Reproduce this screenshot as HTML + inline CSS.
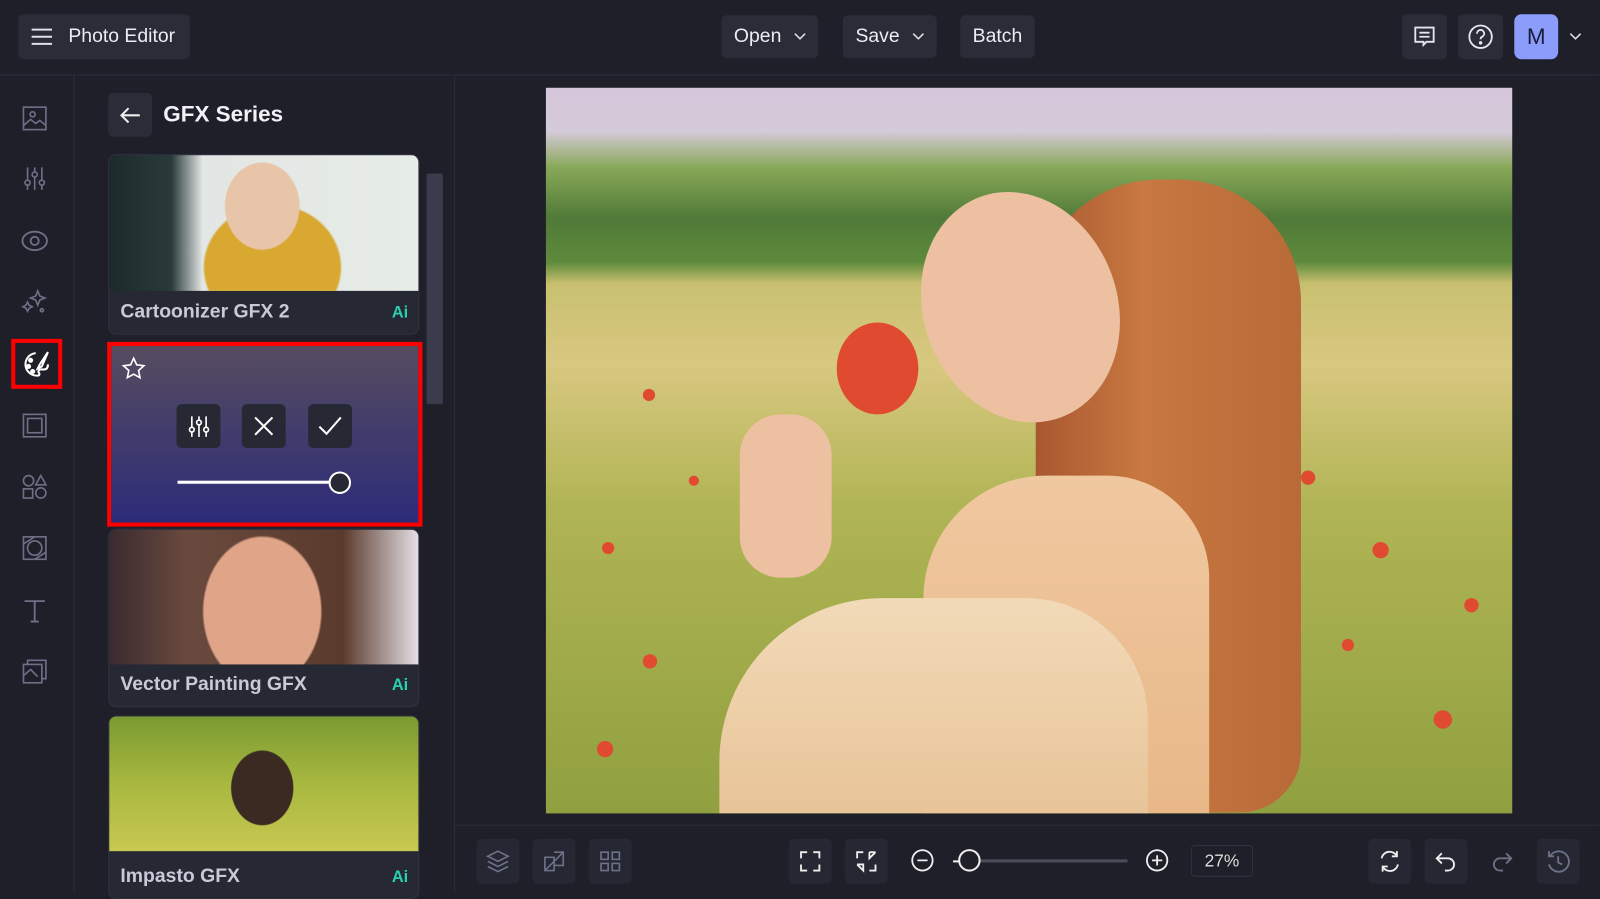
<!DOCTYPE html>
<html><head><meta charset="utf-8"><style>
*{box-sizing:border-box;margin:0;padding:0}
html,body{width:1600px;height:891px;overflow:hidden;background:#1e1f29;font-family:"Liberation Sans",sans-serif;color:#e6e6ee}
#s{position:absolute;left:0;top:0;width:1568px;height:873px;transform:scale(1.0204,1.0206);transform-origin:0 0;background:#1e1f29}
.a{position:absolute}
.btn{position:absolute;background:#2a2c38;border-radius:5px;display:flex;align-items:center;justify-content:center;font-size:19px;color:#ececf2}
svg{display:block}
.ri{position:absolute;left:20px}
.card{position:absolute;left:106px;width:305px;background:#262834;border-radius:8px;overflow:hidden;border:1px solid #30323f}
.card .t{position:absolute;left:11px;bottom:10px;font-size:19px;color:#c9c9d8;font-weight:bold}
.card .ai{position:absolute;right:10px;bottom:11px;font-size:16px;color:#29d0b0;font-weight:bold}
.bb{position:absolute;top:822px;width:42px;height:44px;background:#252733;border-radius:5px;display:flex;align-items:center;justify-content:center}
.p{position:absolute;border-radius:50%;background:#e04a30}
</style></head><body><div id="s">
<div class="a" style="left:0;top:73px;width:1568px;height:1px;background:#2c2e3a"></div>
<div class="btn" style="left:18px;top:14px;width:168px;height:44px;justify-content:flex-start;padding-left:12px">
<svg width="22" height="18" viewBox="0 0 22 18"><path d="M1 2h20M1 9h20M1 16h20" stroke="#e0e0ea" stroke-width="2"/></svg><span style="margin-left:15px">Photo Editor</span></div>
<div class="btn" style="left:707px;top:15px;width:95px;height:42px">Open<svg style="margin-left:12px" width="12" height="8"><path d="M1 1l5 5 5-5" stroke="#ddd" stroke-width="1.6" fill="none"/></svg></div>
<div class="btn" style="left:826px;top:15px;width:92px;height:42px">Save<svg style="margin-left:12px" width="12" height="8"><path d="M1 1l5 5 5-5" stroke="#ddd" stroke-width="1.6" fill="none"/></svg></div>
<div class="btn" style="left:941px;top:15px;width:73px;height:42px">Batch</div>
<div class="btn" style="left:1374px;top:14px;width:44px;height:44px"><svg width="24" height="24" viewBox="0 0 24 24" fill="none" stroke="#e6e6ee" stroke-width="1.8"><path d="M3 3h18v14h-7l-3 3v-3H3z M7 8h10M7 12h10"/></svg></div>
<div class="btn" style="left:1429px;top:14px;width:44px;height:44px"><svg width="26" height="26" viewBox="0 0 26 26" fill="none" stroke="#e6e6ee" stroke-width="1.8"><circle cx="13" cy="13" r="11"/><path d="M9.5 10a3.5 3.5 0 1 1 5 3c-1.2.6-1.5 1.3-1.5 2.5"/><circle cx="13" cy="19" r=".8" fill="#e6e6ee"/></svg></div>
<div class="btn" style="left:1484px;top:14px;width:43px;height:44px;background:#8c9cfb;color:#1b1d3a;font-size:22px;border-radius:7px">M</div>
<svg class="a" style="left:1538px;top:32px" width="12" height="8"><path d="M1 1l5 5 5-5" stroke="#ddd" stroke-width="1.6" fill="none"/></svg>
<div class="a" style="left:72px;top:74px;width:1px;height:800px;background:#2c2e3a"></div>
<svg class="ri" style="top:103px" width="28" height="26" viewBox="0 0 28 26" fill="none" stroke="#6e7088" stroke-width="1.6"><rect x="3" y="2" width="22" height="22"/><circle cx="12" cy="9" r="2.5"/><path d="M3 20l7-6 5 4 4-3 6 5"/></svg>
<svg class="ri" style="top:161px" width="28" height="28" viewBox="0 0 28 28" fill="none" stroke="#6e7088" stroke-width="1.6"><path d="M7 3v22M14 3v22M21 3v22"/><circle cx="7" cy="18" r="2.5" fill="#1e1f29"/><circle cx="14" cy="10" r="2.5" fill="#1e1f29"/><circle cx="21" cy="18" r="2.5" fill="#1e1f29"/></svg>
<svg class="ri" style="top:222px" width="28" height="28" viewBox="0 0 28 28" fill="none" stroke="#6e7088" stroke-width="1.8"><ellipse cx="14" cy="14" rx="12" ry="9"/><circle cx="14" cy="14" r="4"/></svg>
<svg class="ri" style="top:282px" width="28" height="28" viewBox="0 0 28 28" fill="none" stroke="#6e7088" stroke-width="1.6"><path d="M17 3l2 5 5 2-5 2-2 5-2-5-5-2 5-2z"/><path d="M7 14l1.5 3 3 1.5-3 1.5L7 23l-1.5-3L2.5 18.5l3-1.5z"/><circle cx="21" cy="22" r="1.5"/></svg>
<div class="a" style="left:11px;top:332px;width:50px;height:49px;border:4px solid #f00"></div>
<svg class="ri" style="top:342px" width="30" height="30" viewBox="0 0 30 30" fill="none" stroke="#fff" stroke-width="2"><path d="M15 4a11 11 0 1 0 2 22c2 0 2-2 1-3s0-3 2-3h3c3 0 4-2 4-5"/><circle cx="10" cy="11" r="1.5" fill="#fff"/><circle cx="8" cy="17" r="1.5" fill="#fff"/><circle cx="12" cy="22" r="1.5" fill="#fff"/><path d="M27 3l-8 12 -2 4 4-2z"/></svg>
<svg class="ri" style="top:403px" width="28" height="28" viewBox="0 0 28 28" fill="none" stroke="#6e7088" stroke-width="1.6"><rect x="3" y="3" width="22" height="22"/><rect x="7" y="7" width="14" height="14"/></svg>
<svg class="ri" style="top:463px" width="28" height="28" viewBox="0 0 28 28" fill="none" stroke="#6e7088" stroke-width="1.6"><circle cx="8" cy="8" r="5"/><path d="M20 3l5 9H15z"/><rect x="3" y="16" width="9" height="9"/><circle cx="20" cy="20" r="5"/></svg>
<svg class="ri" style="top:523px" width="28" height="28" viewBox="0 0 28 28" fill="none" stroke="#6e7088" stroke-width="1.6"><rect x="3" y="3" width="22" height="22"/><circle cx="14" cy="14" r="7"/><path d="M3 10l11-7M25 18L14 25"/></svg>
<svg class="ri" style="top:584px" width="28" height="28" viewBox="0 0 28 28" fill="none" stroke="#6e7088" stroke-width="1.8"><path d="M4 5h20M14 5v20M10 25h8"/></svg>
<svg class="ri" style="top:644px" width="28" height="28" viewBox="0 0 28 28" fill="none" stroke="#6e7088" stroke-width="1.6"><rect x="3" y="7" width="18" height="18"/><path d="M7 7V3h18v18h-4"/><path d="M3 18l7-6 7 7"/></svg>
<div class="a" style="left:445px;top:74px;width:1px;height:800px;background:#2c2e3a"></div>
<div class="btn" style="left:106px;top:91px;width:43px;height:43px"><svg width="22" height="18" viewBox="0 0 22 18" fill="none" stroke="#eee" stroke-width="2"><path d="M20 9H3M9 2L2 9l7 7"/></svg></div>
<div class="a" style="left:160px;top:99px;font-size:22px;font-weight:bold;color:#f2f2f6">GFX Series</div>
<div class="card" style="top:151px;height:177px"><div class="a" style="left:0;top:0;width:305px;height:133px;background:radial-gradient(ellipse 60px 70px at 150px 50px,#e8c4a8 60%,transparent 62%),radial-gradient(ellipse 120px 110px at 160px 110px,#d8a830 55%,transparent 57%),linear-gradient(90deg,#1c2a2a 0,#2a3a3a 20%,#e2e6e4 30%,#e6ece8 100%)"></div><span class="t">Cartoonizer GFX 2</span><span class="ai">Ai</span></div>
<div class="a" style="left:105px;top:335px;width:309px;height:181px;border:4px solid #f00;background:linear-gradient(#564c60,#2d2c78)"></div>
<svg class="a" style="left:119px;top:349px" width="24" height="24" viewBox="0 0 24 24" fill="none" stroke="#fff" stroke-width="1.6"><path d="M12 2l3 6.5 7 .8-5.2 4.8 1.4 7L12 17.6 5.8 21l1.4-7L2 9.3l7-.8z"/></svg>
<div class="a" style="left:173px;top:396px;width:43px;height:43px;background:#262834;border-radius:5px"></div>
<svg class="a" style="left:183px;top:406px" width="24" height="24" viewBox="0 0 24 24" fill="none" stroke="#fff" stroke-width="1.6"><path d="M5 2v20M12 2v20M19 2v20"/><circle cx="5" cy="15" r="2.3" fill="#262834"/><circle cx="12" cy="8" r="2.3" fill="#262834"/><circle cx="19" cy="15" r="2.3" fill="#262834"/></svg>
<div class="a" style="left:237px;top:396px;width:43px;height:43px;background:#262834;border-radius:5px"></div>
<svg class="a" style="left:248px;top:407px" width="21" height="21" viewBox="0 0 21 21" stroke="#fff" stroke-width="2"><path d="M2 2l17 17M19 2L2 19"/></svg>
<div class="a" style="left:302px;top:396px;width:43px;height:43px;background:#262834;border-radius:5px"></div>
<svg class="a" style="left:312px;top:407px" width="23" height="20" viewBox="0 0 23 20" fill="none" stroke="#fff" stroke-width="2"><path d="M1 11l7 7L22 2"/></svg>
<div class="a" style="left:174px;top:471px;width:150px;height:3px;background:#fff"></div>
<div class="a" style="left:322px;top:462px;width:22px;height:22px;border-radius:50%;border:2.5px solid #fff;background:#262834"></div>
<div class="card" style="top:518px;height:175px"><div class="a" style="left:0;top:0;width:305px;height:132px;background:radial-gradient(ellipse 95px 120px at 150px 80px,#e0a488 60%,transparent 62%),linear-gradient(90deg,#3a2a30,#6a4a3e 25%,#5a3a2c 75%,#e8e4ea)"></div><span class="t">Vector Painting GFX</span><span class="ai">Ai</span></div>
<div class="card" style="top:701px;height:180px"><div class="a" style="left:0;top:0;width:305px;height:132px;background:radial-gradient(ellipse 50px 60px at 150px 70px,#3a2a22 60%,transparent 62%),linear-gradient(#7a9a30,#a8b840 50%,#c8c850)"></div><span class="t">Impasto GFX</span><span class="ai">Ai</span></div>
<div class="a" style="left:418px;top:170px;width:16px;height:226px;background:#3a3c4b;border-radius:2px"></div>
<div class="a" style="left:535px;top:86px;width:947px;height:711px;background:linear-gradient(#d6c6da 0,#d4cad8 6%,#88a858 11%,#507a38 18%,#5e8a3c 24%,#c8c070 27%,#d8c880 38%,#b0b454 58%,#90a040 100%);overflow:hidden">
<div class="p" style="left:95px;top:295px;width:12px;height:12px"></div>
<div class="p" style="left:55px;top:445px;width:12px;height:12px"></div>
<div class="p" style="left:95px;top:555px;width:14px;height:14px"></div>
<div class="p" style="left:740px;top:375px;width:14px;height:14px"></div>
<div class="p" style="left:810px;top:445px;width:16px;height:16px"></div>
<div class="p" style="left:870px;top:610px;width:18px;height:18px"></div>
<div class="p" style="left:50px;top:640px;width:16px;height:16px"></div>
<div class="p" style="left:140px;top:380px;width:10px;height:10px"></div>
<div class="p" style="left:900px;top:500px;width:14px;height:14px"></div>
<div class="p" style="left:780px;top:540px;width:12px;height:12px"></div>
<div class="a" style="left:480px;top:90px;width:260px;height:620px;border-radius:120px 120px 60px 60px;background:linear-gradient(90deg,#a85830,#c87840 40%,#b86a38);"></div>
<div class="a" style="left:370px;top:100px;width:190px;height:230px;border-radius:50%;background:#ecc0a0;transform:rotate(-20deg)"></div>
<div class="a" style="left:370px;top:380px;width:280px;height:331px;border-radius:120px 100px 0 0;background:linear-gradient(#f0c8a0,#e8b888)"></div>
<div class="a" style="left:170px;top:500px;width:420px;height:211px;border-radius:160px 120px 0 0;background:linear-gradient(#f2dab8,#e8c498)"></div>
<div class="a" style="left:285px;top:230px;width:80px;height:90px;border-radius:50%;background:#e04a30"></div>
<div class="a" style="left:190px;top:320px;width:90px;height:160px;border-radius:40px;background:#ecc0a0"></div>
</div>
<div class="a" style="left:446px;top:808px;width:1122px;height:1px;background:#2c2e3a"></div>
<div class="bb" style="left:467px"><svg width="26" height="26" viewBox="0 0 26 26" fill="none" stroke="#6e7088" stroke-width="1.6"><path d="M13 3l10 5-10 5-10-5z M3 13l10 5 10-5 M3 18l10 5 10-5"/></svg></div>
<div class="bb" style="left:522px"><svg width="24" height="24" viewBox="0 0 24 24" fill="none" stroke="#6e7088" stroke-width="1.6"><path d="M3 8h9v13H3zM12 3h9v13h-9M3 21L21 3"/></svg></div>
<div class="bb" style="left:577px"><svg width="24" height="24" viewBox="0 0 24 24" fill="none" stroke="#6e7088" stroke-width="1.6"><rect x="3" y="3" width="7" height="7"/><rect x="14" y="3" width="7" height="7"/><rect x="3" y="14" width="7" height="7"/><rect x="14" y="14" width="7" height="7"/></svg></div>
<div class="bb" style="left:773px"><svg width="24" height="24" viewBox="0 0 24 24" fill="none" stroke="#eee" stroke-width="1.8"><path d="M3 9V3h6M15 3h6v6M21 15v6h-6M9 21H3v-6"/></svg></div>
<div class="bb" style="left:828px"><svg width="24" height="24" viewBox="0 0 24 24" fill="none" stroke="#eee" stroke-width="1.8"><path d="M3 9V3h6M15 3l6 0M15 3v6l6-6 M21 15v6h-6M3 15h6v6L3 15"/></svg></div>
<svg class="a" style="left:892px;top:831px" width="24" height="24" viewBox="0 0 24 24" fill="none" stroke="#eee" stroke-width="1.8"><circle cx="12" cy="12" r="10"/><path d="M7 12h10"/></svg>
<div class="a" style="left:945px;top:842px;width:160px;height:3px;background:#4a4c5c"></div>
<div class="a" style="left:934px;top:843px;width:10px;height:2px;background:#eee"></div>
<div class="a" style="left:939px;top:832px;width:22px;height:22px;border-radius:50%;border:2px solid #eee;background:#1e1f29"></div>
<svg class="a" style="left:1122px;top:831px" width="24" height="24" viewBox="0 0 24 24" fill="none" stroke="#eee" stroke-width="1.8"><circle cx="12" cy="12" r="10"/><path d="M7 12h10M12 7v10"/></svg>
<div class="a" style="left:1167px;top:828px;width:61px;height:31px;border:1px solid #30323f;border-radius:4px;font-size:17px;color:#ddd;display:flex;align-items:center;justify-content:center">27%</div>
<div class="bb" style="left:1341px"><svg width="24" height="26" viewBox="0 0 24 26" fill="none" stroke="#eee" stroke-width="1.8"><path d="M4 10a8 8 0 0 1 15-2M20 16a8 8 0 0 1-15 2M19 3v5h-5M5 23v-5h5"/></svg></div>
<div class="bb" style="left:1396px"><svg width="24" height="24" viewBox="0 0 24 24" fill="none" stroke="#eee" stroke-width="1.8"><path d="M8 4L3 9l5 5M3 9h11a6 6 0 0 1 0 12h-3"/></svg></div>
<div class="bb" style="left:1451px;background:#1e1f29"><svg width="24" height="24" viewBox="0 0 24 24" fill="none" stroke="#6e7088" stroke-width="1.8"><path d="M16 4l5 5-5 5M21 9H10a6 6 0 0 0 0 12h3"/></svg></div>
<div class="bb" style="left:1506px"><svg width="26" height="26" viewBox="0 0 26 26" fill="none" stroke="#6e7088" stroke-width="1.8"><path d="M5 8a10 10 0 1 1-1 8M4 3v5h5M13 8v6l4 2"/></svg></div>
</div></body></html>
